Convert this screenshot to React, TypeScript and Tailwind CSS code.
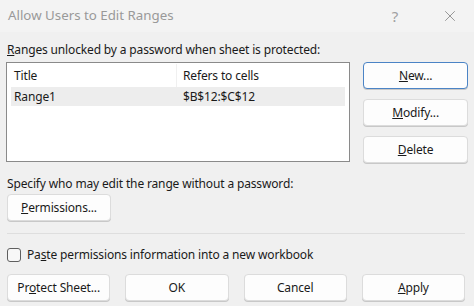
import { X } from 'lucide-react';

const font = { fontFamily: '"Noto Sans", "Open Sans", sans-serif' };

function Btn({ children, primary = false }: { children: React.ReactNode; primary?: boolean }) {
  return (
    <button
      className={
        'h-[27px] w-full rounded-[4px] bg-[#fdfdfd] text-[12px] tracking-[-0.15px] text-[#1a1a1a] shadow-[0_1px_0_#c8c8c8] ' +
        (primary ? 'border border-[#4b84c6]' : 'border border-[#dcdcdc]')
      }
    >
      {children}
    </button>
  );
}

export default function App() {
  return (
    <div
      className="w-[474px] h-[306px] bg-[#f0f0f0] text-[#1a1a1a] overflow-hidden text-[12px] tracking-[-0.15px]"
      style={font}
    >
      {/* title bar */}
      <div className="h-[32px] flex items-center pl-[8px] bg-[#f3f3f3]">
        <span className="text-[13.3px] tracking-normal text-[#999999] flex-1">Allow Users to Edit Ranges</span>
        <span className="text-[15px] text-[#a0a0a0] w-[20px] mr-[36px] text-center">?</span>
        <X className="w-[18px] h-[18px] text-[#8c8c8c] mr-[15px]" strokeWidth={1.2} />
      </div>

      <div className="px-[6px]">
        <div className="mt-[10px] h-[16px] leading-[16px] pl-[1px]">
          <u>R</u>anges unlocked by a password when sheet is protected:
        </div>

        <div className="mt-[4px] flex gap-[13px]">
          {/* list */}
          <div className="w-[345px] h-[100px] border-[1.5px] border-[#8a8a8a] bg-white px-[4px] pt-[1px]">
            <div className="flex h-[23px] items-center">
              <div className="w-[166px] pl-[3px] border-r border-[#f0f0f0] h-full flex items-center">Title</div>
              <div className="pl-[6px]">Refers to cells</div>
            </div>
            <div className="flex h-[19px] items-center bg-[#ededed]">
              <div className="w-[166px] pl-[3px]">Range1</div>
              <div className="pl-[6px]">$B$12:$C$12</div>
            </div>
          </div>

          {/* side buttons */}
          <div className="w-[105px] flex flex-col gap-[10px]">
            <Btn primary>
              <u>N</u>ew...
            </Btn>
            <Btn>
              <u>M</u>odify...
            </Btn>
            <Btn>
              <u>D</u>elete
            </Btn>
          </div>
        </div>

        <div className="mt-[13px] h-[16px] leading-[16px] pl-[1px]">
          Specify who may edit the range without a password:
        </div>
        <div className="mt-[2px] w-[105px] pl-[1px]">
          <Btn>
            <u>P</u>ermissions...
          </Btn>
        </div>

        <div className="mt-[12px] ml-[1px] mr-[3px] h-px bg-[#dedede]" />

        <label className="mt-[13px] h-[16px] leading-[16px] flex items-center gap-[6px] pl-[1px]">
          <span className="w-[14px] h-[14px] rounded-[3px] border border-[#5f5f5f] bg-[#f7f7f7]" />
          <span>
            Pa<u>s</u>te permissions information into a new workbook
          </span>
        </label>

        <div className="mt-[11px] grid grid-cols-4 gap-[15px] pl-[1px] pr-[3px]">
          <Btn>
            Pr<u>o</u>tect Sheet...
          </Btn>
          <Btn>OK</Btn>
          <Btn>Cancel</Btn>
          <Btn>
            <u>A</u>pply
          </Btn>
        </div>
      </div>
    </div>
  );
}
